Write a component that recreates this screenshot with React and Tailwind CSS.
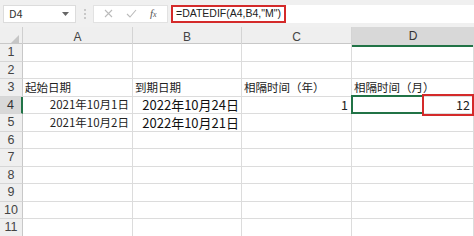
import React from "react";

const font = { fontFamily: '"Noto Sans CJK SC", "Noto Sans", sans-serif' };

const rows = [
  { n: 1, cells: ["", "", "", ""] },
  { n: 2, cells: ["", "", "", ""] },
  { n: 3, cells: ["起始日期", "到期日期", "相隔时间（年）", "相隔时间（月）"] },
  { n: 4, cells: ["2021年10月1日", "2022年10月24日", "1", "12"] },
  { n: 5, cells: ["2021年10月2日", "2022年10月21日", "", ""] },
  { n: 6, cells: ["", "", "", ""] },
  { n: 7, cells: ["", "", "", ""] },
  { n: 8, cells: ["", "", "", ""] },
  { n: 9, cells: ["", "", "", ""] },
  { n: 10, cells: ["", "", "", ""] },
  { n: 11, cells: ["", "", "", ""] },
];

function Cell({ r, c, v }) {
  let cls = "border-r border-b border-[#dcdcdc] h-full flex items-center overflow-visible whitespace-nowrap leading-none relative ";
  if (r === 3) {
    cls += "justify-start pl-[2px] text-[11.5px] text-[#222]";
  } else if (r === 4 || r === 5) {
    if (c === 0) cls += "justify-end pr-[3px] text-[11.5px] text-[#222]";
    else if (c === 1) cls += "justify-end pr-[2px] text-[13px] text-[#111]";
    else cls += "justify-end pr-[3px] text-[12.5px] text-[#222]";
  }
  return <div className={cls}>{v}</div>;
}

export default function App() {
  return (
    <div className="w-[474px] h-[236px] overflow-hidden bg-white relative" style={font}>
      {/* formula bar */}
      <div className="h-[27px] bg-[#f0f0f0] flex items-center pl-[3px]">
        <div className="w-[73px] h-[18px] bg-white border border-[#dcdcdc] flex items-center justify-between pl-[5px] pr-[6px]">
          <span className="text-[11px] text-[#333]">D4</span>
          <svg width="7" height="4" viewBox="0 0 7 4"><path d="M0 0h7L3.5 4z" fill="#666" /></svg>
        </div>
        <div className="w-[17px] flex flex-col items-center gap-[2px]">
          <span className="w-[2px] h-[2px] bg-[#bbb] rounded-full"></span>
          <span className="w-[2px] h-[2px] bg-[#bbb] rounded-full"></span>
          <span className="w-[2px] h-[2px] bg-[#bbb] rounded-full"></span>
        </div>
        <div className="w-[75px] h-[18px] bg-white border border-[#e2e2e2] flex items-center justify-around px-[4px]">
          <svg width="9" height="9" viewBox="0 0 9 9"><path d="M1 1l7 7M8 1L1 8" stroke="#bbb" strokeWidth="1.1" /></svg>
          <svg width="11" height="9" viewBox="0 0 11 9"><path d="M1 5l3 3 6-7" stroke="#bbb" strokeWidth="1.1" fill="none" /></svg>
          <span className="text-[11px] italic text-[#555]" style={{ fontFamily: '"Liberation Serif", serif' }}>f<span className="text-[8px]">x</span></span>
        </div>
        <div className="flex-1 h-[18px] bg-white ml-[3px] flex items-center">
          <div className="h-[18px] border-2 border-[#d42a2a] flex items-center px-[3px] text-[10.5px] text-[#222]" style={{ fontFamily: '"Liberation Sans", sans-serif' }}>
            =DATEDIF(A4,B4,"M")
          </div>
        </div>
      </div>
      {/* column headers */}
      <div className="grid grid-cols-[23px_110px_109px_110px_122px] h-[17px] bg-[#efefef] border-b border-[#c8c8c8] text-[12px] text-[#444]" style={{ fontFamily: '"Liberation Sans", sans-serif' }}>
        <div className="border-r border-[#cfcfcf] flex items-end justify-end pr-[3px] pb-[2px]">
          <svg width="10" height="10" viewBox="0 0 10 10"><path d="M10 0V10H0z" fill="#c6c6c6" /></svg>
        </div>
        <div className="border-r border-[#d4d4d4] flex items-center justify-center">A</div>
        <div className="border-r border-[#d4d4d4] flex items-center justify-center">B</div>
        <div className="border-r border-[#d4d4d4] flex items-center justify-center">C</div>
        <div className="bg-[#d8d8d8] border-b-2 border-[#217346] flex items-center justify-center text-[#333]">D</div>
      </div>
      {/* rows */}
      {rows.map((row) => (
        <div key={row.n} className="grid grid-cols-[23px_110px_109px_110px_122px] h-[17.5px]">
          <div
            className={"flex items-center justify-center text-[12.5px] leading-none border-b border-[#d6d6d6] " + (row.n === 4 ? "bg-[#d8d8d8] border-r-2 border-r-[#217346] text-[#333]" : "bg-[#efefef] border-r border-r-[#c8c8c8] text-[#444]")}
            style={{ fontFamily: '"Liberation Sans", sans-serif' }}
          >
            {row.n}
          </div>
          {row.cells.map((v, i) => (
            <Cell key={i} r={row.n} c={i} v={v} />
          ))}
        </div>
      ))}
      {/* selection D4 */}
      <div className="absolute left-[351px] top-[95px] w-[73px] h-[19px] border-2 border-[#217346] pointer-events-none"></div>
      <div className="absolute left-[422px] top-[94px] w-[52px] h-[22px] border-2 border-[#d42a2a] pointer-events-none"></div>
    </div>
  );
}
